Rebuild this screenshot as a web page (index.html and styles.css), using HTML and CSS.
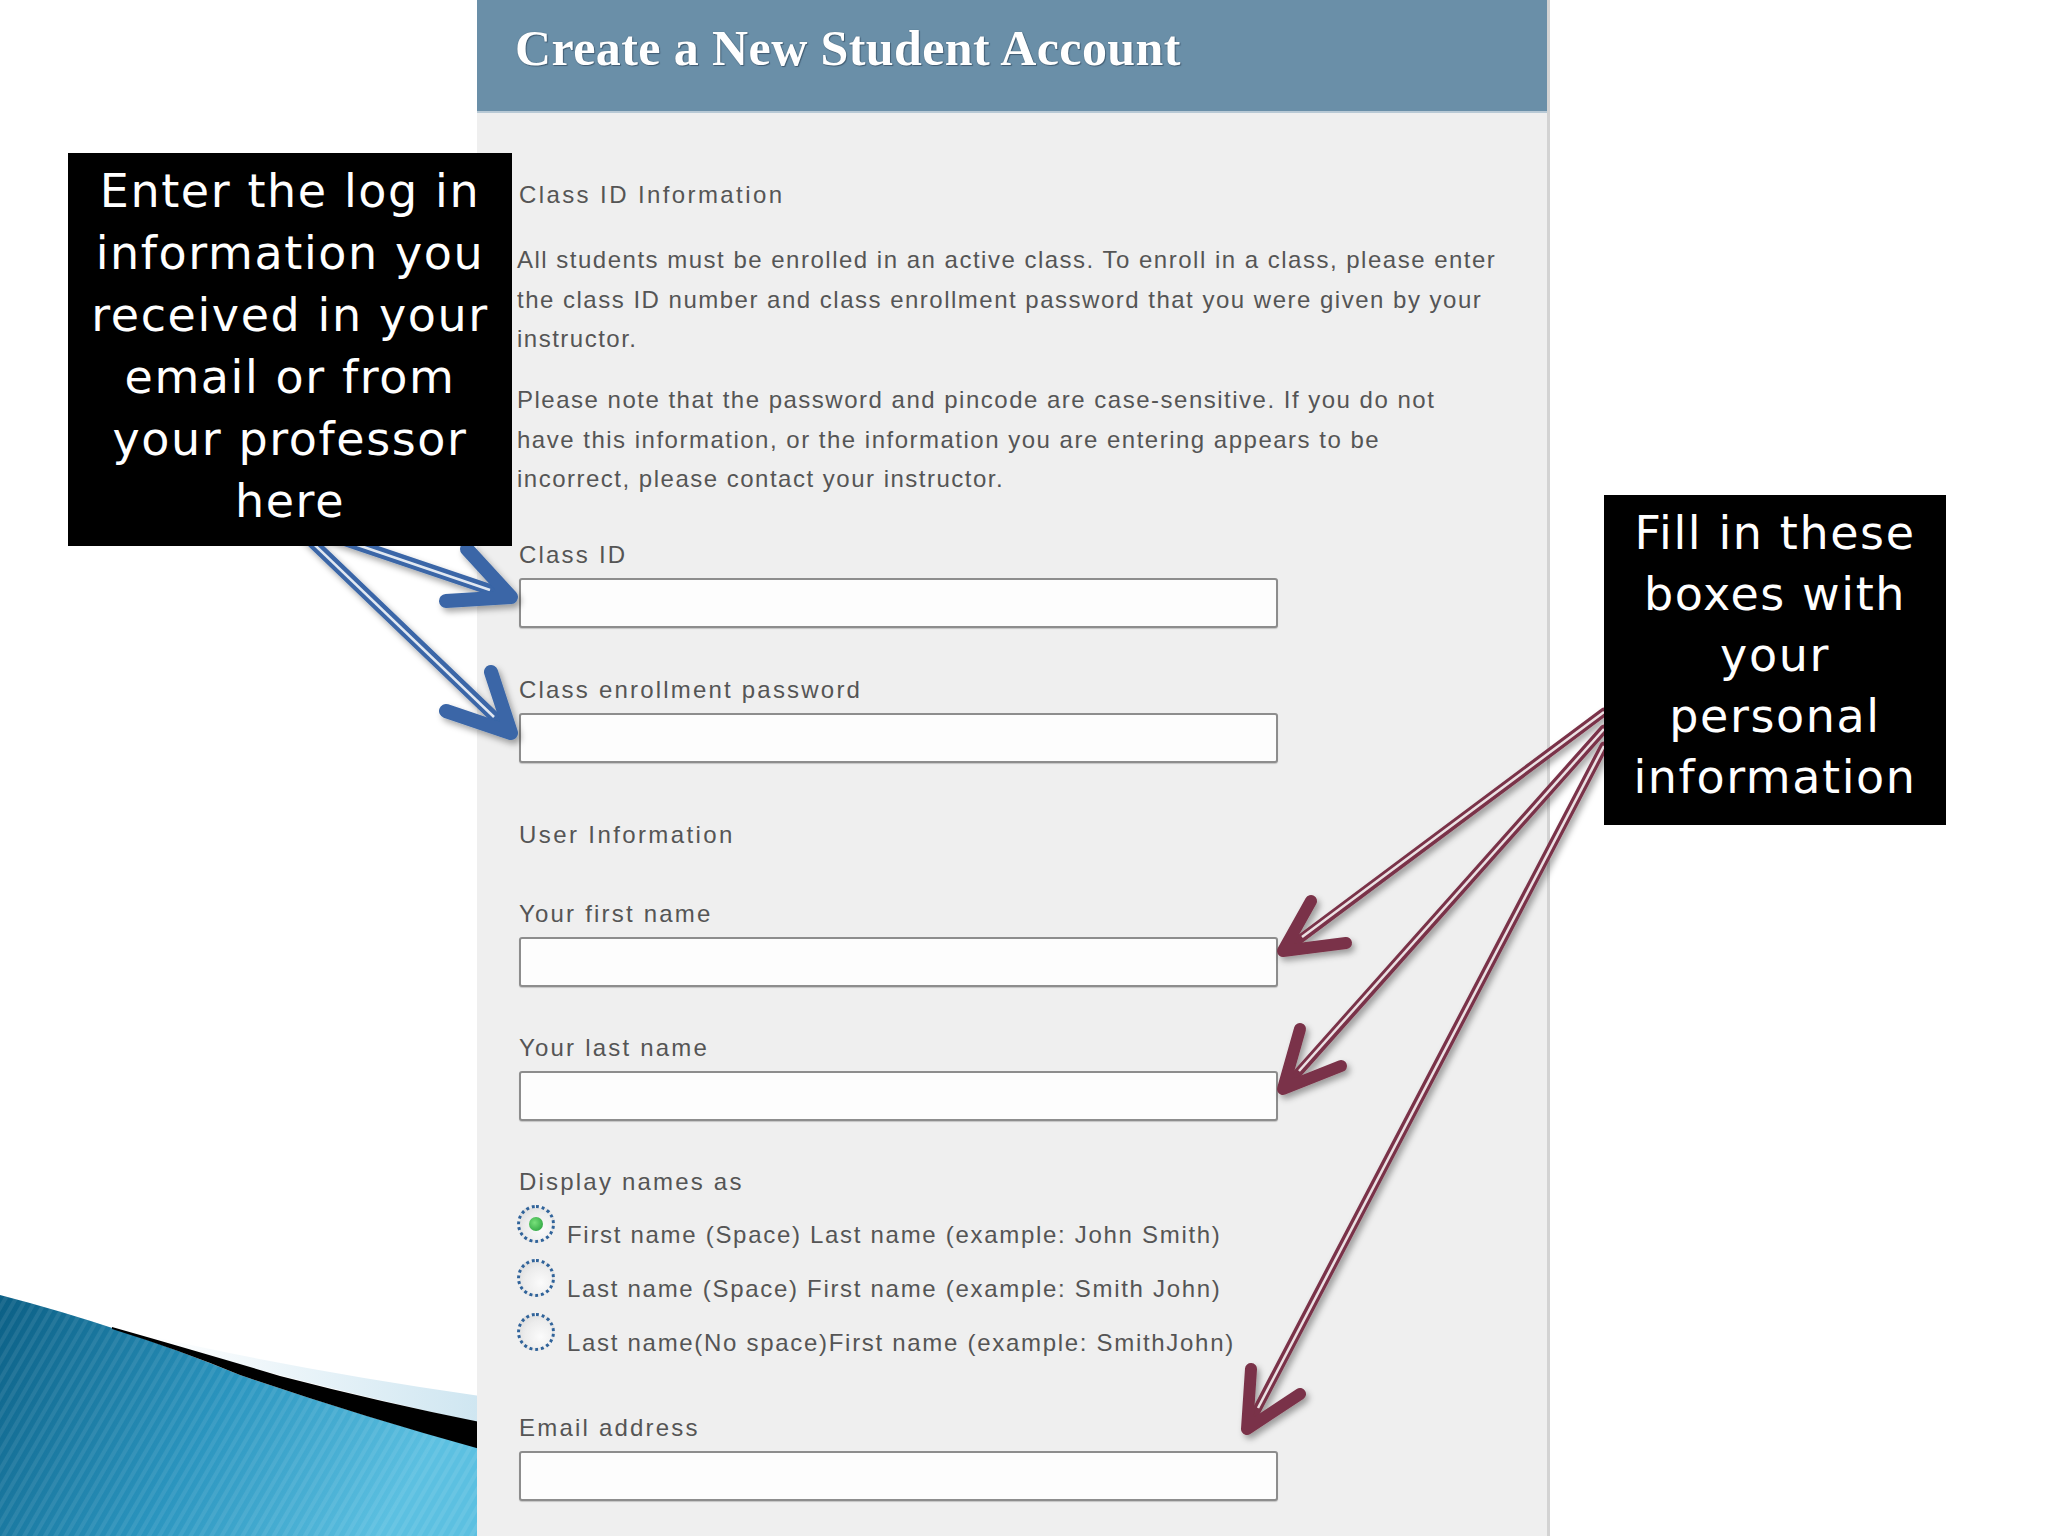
FILE: index.html
```html
<!DOCTYPE html>
<html lang="en">
<head>
<meta charset="utf-8">
<title>Create a New Student Account</title>
<link rel="stylesheet" href="styles.css">
</head>
<body>
<div class="page">
  <svg class="wave" viewBox="0 0 480 286" width="480" height="286" aria-hidden="true">
    <defs>
      <linearGradient id="waveBlue" x1="0" y1="0" x2="1" y2="0.3">
        <stop offset="0" stop-color="#0b5f85"/>
        <stop offset="0.55" stop-color="#2b95bf"/>
        <stop offset="1" stop-color="#5cc0e1"/>
      </linearGradient>
      <linearGradient id="waveLight" x1="0" y1="0" x2="1" y2="0">
        <stop offset="0" stop-color="#ffffff"/>
        <stop offset="1" stop-color="#cfe6f1"/>
      </linearGradient>
      <pattern id="stripes" width="9" height="9" patternUnits="userSpaceOnUse" patternTransform="rotate(30)">
        <rect width="4" height="9" fill="#ffffff" opacity="0.08"/>
      </pattern>
    </defs>
    <path d="M150 86 Q300 120 480 146 L480 173 Q300 133 150 90 Z" fill="url(#waveLight)"/>
    <path d="M0 45 Q120 76 240 125 Q360 166 480 198 L480 286 L0 286 Z" fill="url(#waveBlue)"/>
    <path d="M0 45 Q120 76 240 125 Q360 166 480 198 L480 286 L0 286 Z" fill="url(#stripes)"/>
    <path d="M112 77 Q200 102 280 126 Q380 152 480 172 L480 199 Q360 166 240 125 Q180 100 112 79 Z" fill="#000"/>
  </svg>

  <main class="panel">
    <header class="panel-head">
      <h1>Create a New Student Account</h1>
    </header>
    <div class="panel-body">
      <h2 class="sec">Class ID Information</h2>
      <p class="para">All students must be enrolled in an active class. To enroll in a class, please enter<br>the class ID number and class enrollment password that you were given by your<br>instructor.</p>
      <p class="para second">Please note that the password and pincode are case-sensitive. If you do not<br>have this information, or the information you are entering appears to be<br>incorrect, please contact your instructor.</p>

      <div class="field f-classid">
        <label class="label" for="classid">Class ID</label>
        <input class="input" id="classid" type="text">
      </div>
      <div class="field f-pwd">
        <label class="label" for="pwd">Class enrollment password</label>
        <input class="input" id="pwd" type="text">
      </div>

      <h2 class="sec s-user">User Information</h2>

      <div class="field f-first">
        <label class="label" for="first">Your first name</label>
        <input class="input" id="first" type="text">
      </div>
      <div class="field f-last">
        <label class="label" for="last">Your last name</label>
        <input class="input" id="last" type="text">
      </div>

      <div class="label l-display">Display names as</div>
      <div class="radios">
        <div class="radio-row"><span class="radio checked"></span><span>First name (Space) Last name (example: John Smith)</span></div>
        <div class="radio-row"><span class="radio"></span><span>Last name (Space) First name (example: Smith John)</span></div>
        <div class="radio-row"><span class="radio"></span><span>Last name(No space)First name (example: SmithJohn)</span></div>
      </div>

      <div class="field f-email">
        <label class="label" for="email">Email address</label>
        <input class="input" id="email" type="text">
      </div>
    </div>
  </main>

  <svg class="arrows" viewBox="0 0 2048 1536" width="2048" height="1536" aria-hidden="true">
    <defs>
      <filter id="shadow" x="-10%" y="-10%" width="130%" height="130%">
        <feDropShadow dx="3" dy="4" stdDeviation="3" flood-color="#000" flood-opacity="0.35"/>
      </filter>
    </defs>
    <g class="arrow-blue" filter="url(#shadow)">
      <line x1="290" y1="522" x2="506" y2="595" class="shaft"/>
      <line x1="290" y1="522" x2="490" y2="590" class="shaft-line"/>
      <polyline points="446,601 511,597 467,549" class="head"/>
      <line x1="220" y1="454" x2="506" y2="728" class="shaft"/>
      <line x1="220" y1="454" x2="494" y2="717" class="shaft-line"/>
      <polyline points="446,711 511,733 491,672" class="head"/>
    </g>
    <g class="arrow-red" filter="url(#shadow)">
      <line x1="1604" y1="712" x2="1288" y2="948" class="shaft"/>
      <line x1="1604" y1="712" x2="1302" y2="937" class="shaft-line"/>
      <polyline points="1346,943 1283,951 1311,901" class="head"/>
      <line x1="1604" y1="729" x2="1288" y2="1084" class="shaft"/>
      <line x1="1604" y1="729" x2="1299" y2="1071" class="shaft-line"/>
      <polyline points="1341,1066 1283,1089 1300,1029" class="head"/>
      <line x1="1604" y1="746" x2="1250" y2="1423" class="shaft"/>
      <line x1="1604" y1="746" x2="1258" y2="1408" class="shaft-line"/>
      <polyline points="1300,1394 1247,1429 1251,1369" class="head"/>
    </g>
  </svg>

  <div class="callout callout-left">Enter the log in<br>information you<br>received in your<br>email or from<br>your professor<br>here</div>
  <div class="callout callout-right">Fill in these<br>boxes with<br>your<br>personal<br>information</div>
</div>
</body>
</html>
```

FILE: styles.css
```css
* {
  box-sizing: border-box;
}

html,
body {
  margin: 0;
  padding: 0;
}

body {
  width: 2048px;
  height: 1536px;
  overflow: hidden;
  background: #ffffff;
  font-family: "Liberation Sans", Arial, sans-serif;
}

.page {
  position: relative;
  width: 2048px;
  height: 1536px;
  padding-left: 477px;
}

/* bottom-left decorative wave */
.wave {
  position: absolute;
  left: 0;
  top: 1250px;
  z-index: 0;
}

/* form panel */
.panel {
  position: relative;
  z-index: 1;
  width: 1073px;
  height: 1536px;
  background: #efefef;
  border-right: 3px solid #d3d3d3;
}

.panel-head {
  height: 113px;
  background: #6a8fa8;
  border-bottom: 2px solid #b8c9d5;
  padding: 18px 0 0 38px;
}

.panel-head h1 {
  margin: 0;
  font-family: "Liberation Serif", "Times New Roman", serif;
  font-weight: bold;
  font-size: 50px;
  line-height: 60px;
  letter-spacing: 0.4px;
  color: #ffffff;
  text-shadow: 0 0 1px #3d5b70, 1px 1px 1px rgba(40, 60, 80, 0.6);
}

.panel-body {
  padding: 67px 0 0 42px;
  color: #555555;
  font-size: 24px;
}

.sec {
  margin: 0;
  font-size: 24px;
  font-weight: normal;
  line-height: 30px;
  letter-spacing: 2.4px;
}

.sec.s-user {
  margin-top: 57px;
}

.para {
  margin: 30px 0 0 -2px;
  line-height: 39.5px;
  letter-spacing: 1.5px;
  white-space: nowrap;
}

.para.second {
  margin-top: 21.5px;
}

.label {
  display: block;
  line-height: 30px;
  letter-spacing: 2.2px;
}

.input {
  display: block;
  margin: 8px 0 0;
  width: 759px;
  height: 50px;
  padding: 0 8px;
  border: 2px solid #8d8d8d;
  border-radius: 3px;
  background: #fdfdfd;
  box-shadow: 0 1px 1px rgba(0, 0, 0, 0.18);
  font: inherit;
  outline: none;
}

.f-classid {
  margin-top: 41.5px;
}

.f-pwd {
  margin-top: 47px;
}

.f-first {
  margin-top: 49px;
}

.f-last {
  margin-top: 46px;
}

.l-display {
  margin-top: 46px;
}

.f-email {
  margin-top: 55px;
}

.radios {
  display: flex;
  flex-direction: column;
  gap: 24px;
  margin-top: 23px;
}

.radio-row {
  display: flex;
  align-items: flex-start;
  gap: 12px;
  margin-left: -2px;
  line-height: 30px;
  letter-spacing: 1.7px;
  white-space: nowrap;
}

.radio {
  flex: none;
  display: flex;
  align-items: center;
  justify-content: center;
  width: 38px;
  height: 38px;
  margin-top: -15px;
  border-radius: 50%;
  border: 3px dotted #30639a;
  background: radial-gradient(circle at 65% 65%, #fbfbfb 0%, #ececec 55%, #d6d6d6 100%);
}

.radio.checked::after {
  content: "";
  width: 14px;
  height: 14px;
  border-radius: 50%;
  background: radial-gradient(circle at 40% 40%, #78e07a, #1f9a36);
}

/* annotation arrows */
.arrows {
  position: absolute;
  left: 0;
  top: 0;
  z-index: 2;
  pointer-events: none;
}

.arrows .shaft {
  stroke-width: 11;
  stroke-linecap: round;
}

.arrows .shaft-line {
  stroke: #ffffff;
  stroke-width: 2.5;
  opacity: 0.85;
}

.arrows .head {
  fill: none;
  stroke-width: 14;
  stroke-linecap: round;
  stroke-linejoin: round;
}

.arrow-blue .shaft,
.arrow-blue .head {
  stroke: #3a66a7;
}

.arrow-red .shaft,
.arrow-red .head {
  stroke: #7a3348;
}

.arrow-red .shaft {
  stroke-width: 9;
}

.arrow-red .head {
  stroke-width: 12;
}

/* black callouts */
.callout {
  position: absolute;
  z-index: 3;
  background: #000000;
  color: #ffffff;
  font-family: "DejaVu Sans", Verdana, sans-serif;
  font-size: 46px;
  letter-spacing: 1.6px;
  text-align: center;
}

.callout-left {
  left: 68px;
  top: 153px;
  width: 444px;
  height: 393px;
  padding-top: 7px;
  line-height: 62px;
}

.callout-right {
  left: 1604px;
  top: 495px;
  width: 342px;
  height: 330px;
  padding-top: 8px;
  line-height: 61px;
}
```
